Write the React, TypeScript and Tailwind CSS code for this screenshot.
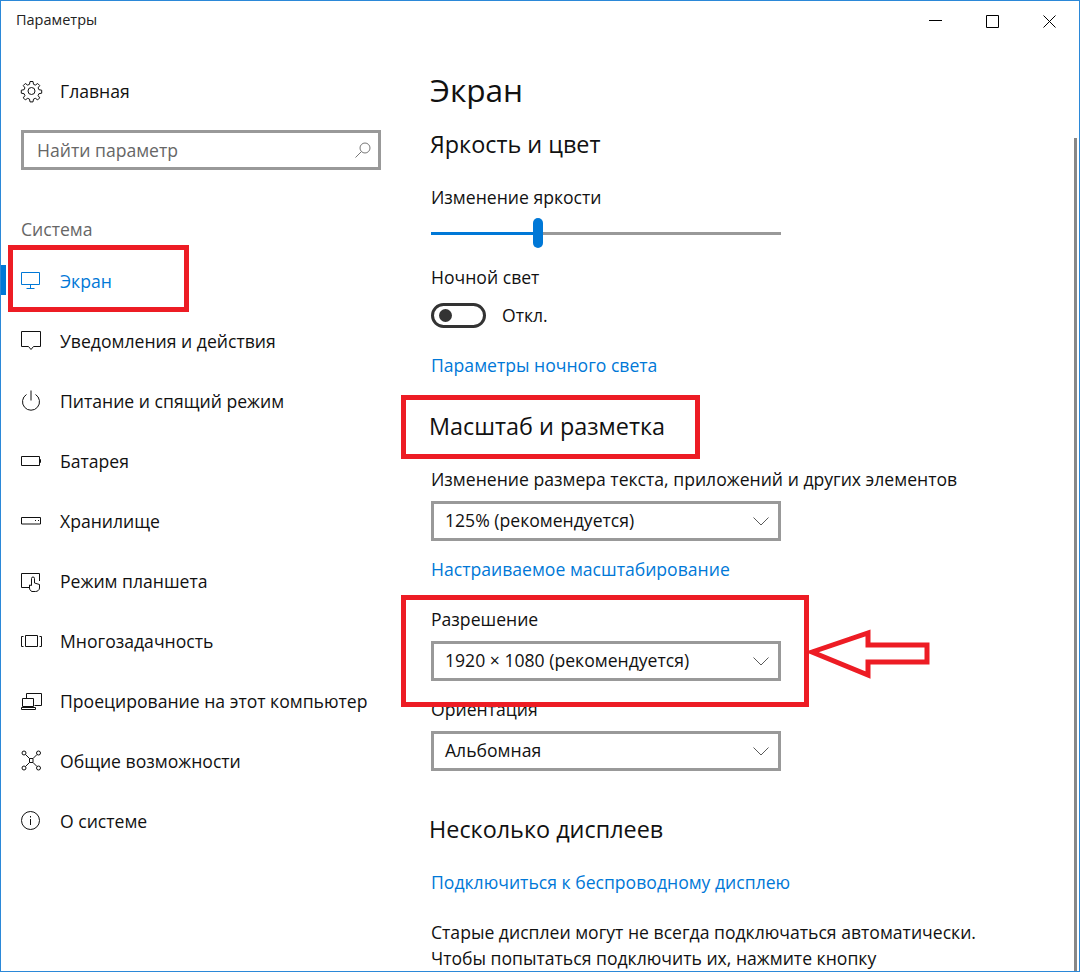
const navItems = [
  { label: "Уведомления и действия", icon: "note" },
  { label: "Питание и спящий режим", icon: "power" },
  { label: "Батарея", icon: "battery" },
  { label: "Хранилище", icon: "storage" },
  { label: "Режим планшета", icon: "tablet" },
  { label: "Многозадачность", icon: "multi" },
  { label: "Проецирование на этот компьютер", icon: "project" },
  { label: "Общие возможности", icon: "access" },
  { label: "О системе", icon: "info" },
];

function NavIcon({ name }: { name: string }) {
  return (
    <svg width="22" height="22" viewBox="0 0 22 22" fill="none" stroke="currentColor" strokeWidth="1" className="shrink-0 overflow-visible">
      {name === "gear" && (
        <g>
          <circle cx="10.500" cy="11" r="3.500" />
          <path d="M9 1.500h3l.5 2.800 1.800.8 2.400-1.600 2 2-1.600 2.400.8 1.800 2.800.5v3l-2.800.5-.8 1.800 1.600 2.400-2 2-2.400-1.600-1.800.8-.5 2.800H9l-.5-2.800-1.800-.8-2.400 1.600-2-2 1.600-2.400-.8-1.800-2.800-.5v-3l2.800-.5.8-1.800-1.600-2.400 2-2 2.400 1.600 1.800-.8z" />
        </g>
      )}
      {name === "screen" && <path d="M.5 2.500h18v12H.5zM9.500 15v3M5.500 18.500h8" />}
      {name === "note" && <path d="M.5 1.500h19v15h-7l-2.500 3-2.500-3h-7z" />}
      {name === "power" && <path d="M10 .5v10M5.500 4.500a8.500 8.500 0 1 0 9 0" />}
      {name === "battery" && <path d="M.5 6.500h18v9H.5zM19 9.500h.5v3H19" />}
      {name === "storage" && <path d="M.5 7.500h19v6.500H.5zM14 10.500h1M17 10.500h1" />}
      {name === "tablet" && <path d="M8 17.500H.5v-14h18V11M11 21.500c-1.500-.5-2.500-2-2.500-3.500v-3l2 .5V8.500a1.500 1.500 0 0 1 3 0V13l5 1.500V18c0 2-2 3.500-4 3.500z" />}
      {name === "multi" && <path d="M4.500 5.500h12v11h-12zM2.500 6.500H.5v10h2M18.500 6.500h2v10h-2" />}
      {name === "project" && <path d="M5.500 8V3.500h15v12h-7M1.500 8.500h11v8h-11zM.5 19.500h14v-2H.5z" />}
      {name === "access" && (
        <g>
          <circle cx="3" cy="3" r="2" />
          <circle cx="17.500" cy="3" r="2" />
          <circle cx="3" cy="18" r="2" />
          <circle cx="17.500" cy="18" r="2" />
          <path d="M4.500 4.500l4 4M16 4.500l-4 4M4.500 16.500l4-4M16 16.500l-4-4M8.500 8.500h3.500v4H8.500z" />
        </g>
      )}
      {name === "info" && (
        <g>
          <circle cx="9.500" cy="10.500" r="9" />
          <path d="M9.500 9v6M9.500 6v1.500" />
        </g>
      )}
    </svg>
  );
}

function Select({ value }: { value: string }) {
  return (
    <div className="flex h-10 w-[350px] items-center justify-between border-[3px] border-[#999999] pl-[11px] pr-[9px] text-[17.6px]">
      <span className="mt-[-2px]">{value}</span>
      <svg width="16" height="9" viewBox="0 0 16 9" fill="none" stroke="#5a5a5a" strokeWidth="1">
        <path d="M.5.5l7.500 7.500 7.500-7.500" />
      </svg>
    </div>
  );
}

function Row({ h, className, children }: { h: string; className?: string; children: React.ReactNode }) {
  return <div className={`flex items-center ${h} ${className ?? ""}`}>{children}</div>;
}

export default function App() {
  return (
    <div
      className="relative h-[972px] w-[1080px] overflow-hidden border border-[#2b88d8] bg-white text-[#111] antialiased"
      style={{ fontFamily: '"Open Sans", "Noto Sans", sans-serif' }}
    >
      <div className="flex h-[37px] items-center justify-between pt-px">
        <span className="pl-[15px] text-[14.5px] text-[#222]">Параметры</span>
        <div className="flex items-center gap-[44px] pr-[23px] pt-[3px] text-black">
          <svg width="13" height="13" viewBox="0 0 13 13" stroke="currentColor" fill="none">
            <path d="M0 5.500h13" />
          </svg>
          <svg width="13" height="13" viewBox="0 0 13 13" stroke="currentColor" fill="none">
            <path d="M.5.500h12v12H.500z" />
          </svg>
          <svg width="13" height="13" viewBox="0 0 13 13" stroke="currentColor" fill="none">
            <path d="M.5.500l12 12M12.500.500l-12 12" />
          </svg>
        </div>
      </div>

      <div className="flex">
        {/* left nav */}
        <div className="w-[399px] shrink-0 pt-[23px] pl-[20px] text-[17.6px]">
          <Row h="h-[60px]">
            <NavIcon name="gear" />
            <span className="ml-[17px]">Главная</span>
          </Row>
          <div className="mt-[9px] flex h-10 w-[360px] items-center justify-between border-[3px] border-[#999999] pl-[13px] pr-[6px] text-[#666]">
            <span>Найти параметр</span>
            <svg width="18" height="18" viewBox="0 0 18 18" fill="none" stroke="#777" strokeWidth="1">
              <circle cx="11" cy="7" r="5" />
              <path d="M7.500 10.500L1.500 16.500" />
            </svg>
          </div>
          <Row h="h-8" className="mt-[43px] text-[#666]">Система</Row>
          <Row h="h-[60px]" className="mt-[6px] text-[#0078d7]">
            <NavIcon name="screen" />
            <span className="ml-[17px]">Экран</span>
          </Row>
          {navItems.map((item) => (
            <Row key={item.label} h="h-[60px]">
              <NavIcon name={item.icon} />
              <span className="ml-[17px]">{item.label}</span>
            </Row>
          ))}
        </div>

        {/* content */}
        <div className="min-w-0 flex-1 pl-[31px] text-[17.6px]">
          <Row h="h-[60px]" className="mt-[22px] text-[31.6px]">
            <span className="ml-[-1px]">Экран</span>
          </Row>
          <Row h="h-[40px]" className="mt-[5px] text-[23.4px]">
            <span className="ml-[-1px]">Яркость и цвет</span>
          </Row>
          <Row h="h-[30px]" className="mt-[17px]">Изменение яркости</Row>
          <div className="mt-[6px] flex h-[30px] w-[350px] items-center">
            <div className="h-[3px] w-[102px] bg-[#0078d7]" />
            <div className="h-[30px] w-[10px] rounded-full bg-[#0078d7]" />
            <div className="h-[3px] flex-1 bg-[#999999]" />
          </div>
          <Row h="h-[30px]" className="mt-[14px]">Ночной свет</Row>
          <div className="mt-[10px] flex h-[26px] items-center">
            <div className="flex h-[25px] w-[55px] items-center rounded-full border-[3px] border-[#333] pl-[5px]">
              <div className="h-[13px] w-[13px] rounded-full bg-[#333]" />
            </div>
            <span className="ml-4">Откл.</span>
          </div>
          <Row h="h-[30px]" className="mt-[22px] text-[#0078d7]">Параметры ночного света</Row>
          <Row h="h-[40px]" className="mt-[27px] text-[23.4px]">
            <span className="ml-[-2px]">Масштаб и разметка</span>
          </Row>
          <Row h="h-[30px]" className="mt-[17px]">Изменение размера текста, приложений и других элементов</Row>
          <div className="mt-[7px]">
            <Select value="125% (рекомендуется)" />
          </div>
          <Row h="h-[30px]" className="mt-[13px] text-[#0078d7]">Настраиваемое масштабирование</Row>
          <Row h="h-[30px]" className="mt-[20px]">Разрешение</Row>
          <div className="mt-[7px]">
            <Select value="1920 × 1080 (рекомендуется)" />
          </div>
          <Row h="h-[30px]" className="mt-[13px]">Ориентация</Row>
          <div className="mt-[7px]">
            <Select value="Альбомная" />
          </div>
          <Row h="h-[40px]" className="mt-[39px] text-[23.4px]">
            <span className="ml-[-2px]">Несколько дисплеев</span>
          </Row>
          <Row h="h-[30px]" className="mt-[17px] text-[#0078d7]">Подключиться к беспроводному дисплею</Row>
          <p className="mt-[22px] w-[570px] leading-[26px]">
            Старые дисплеи могут не всегда подключаться автоматически. Чтобы попытаться подключить их, нажмите кнопку
          </p>
        </div>
      </div>

      {/* selected marker and scrollbar */}
      <div className="absolute left-[-1px] top-[264px] h-[30px] w-[6px] bg-[#0078d7]" />
      <div className="absolute right-[2px] top-[137px] bottom-0 w-[3px] bg-[#888888]" />

      {/* red annotations */}
      <div className="absolute left-[7px] top-[244px] h-[67px] w-[181px] border-[5px] border-[#ed1c24]" />
      <div className="absolute left-[400px] top-[394px] h-[64px] w-[299px] border-[5px] border-[#ed1c24]" />
      <div className="absolute left-[400px] top-[594px] h-[112px] w-[408px] border-[5px] border-[#ed1c24]" />
      <svg className="absolute left-[805px] top-[626px]" width="128" height="54" viewBox="0 0 128 54" fill="none" stroke="#ed1c24" strokeWidth="5">
        <path d="M6 25L62 6v12h59v17H62v13z" />
      </svg>
    </div>
  );
}
